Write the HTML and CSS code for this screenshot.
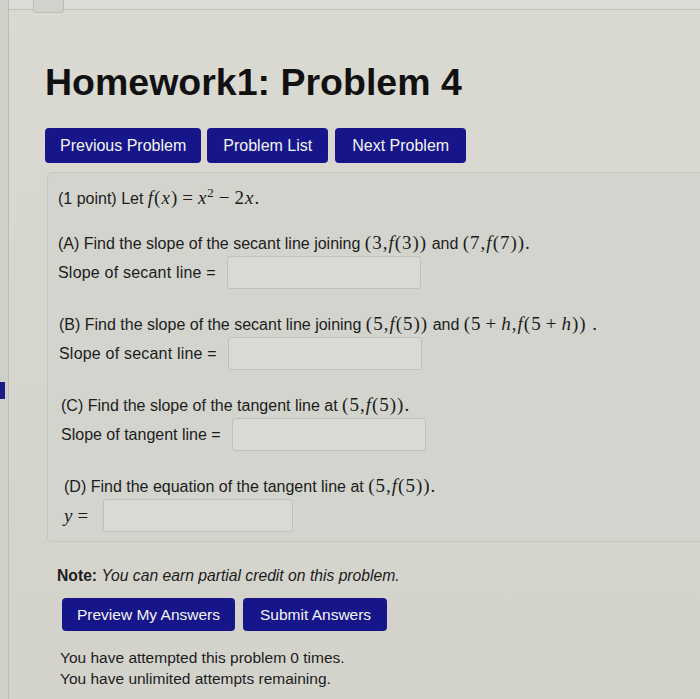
FILE: index.html
```html
<!DOCTYPE html>
<html>
<head>
<meta charset="utf-8">
<link rel="stylesheet" href="styles.css">
</head>
<body>
<div class="screen">
  <div class="edge"><div class="edge-mark"></div></div>
  <div class="page">
    <div class="topstrip"><div class="tab"></div></div>
    <div class="content">
      <h1 class="title">Homework1: Problem 4</h1>
      <div class="nav">
        <span class="btn">Previous Problem</span>
        <span class="btn btn-list">Problem List</span>
        <span class="btn btn-next">Next Problem</span>
      </div>
      <div class="panel">
        <div class="line">(1 point) Let <span class="m"><i>f</i>(<i>x</i>)<span class="op">=</span><i>x</i><sup>2</sup><span class="op">−</span>2<i>x</i>.</span></div>

        <div class="part part-a">
          <div class="line">(A) Find the slope of the secant line joining <span class="m">(3,<i>f</i>(3))</span> and <span class="m">(7,<i>f</i>(7)).</span></div>
          <div class="ans"><span class="lbl">Slope of secant line =</span><span class="box"></span></div>
        </div>

        <div class="part part-b">
          <div class="line">(B) Find the slope of the secant line joining <span class="m">(5,<i>f</i>(5))</span> and <span class="m">(5<span class="op">+</span><i>h</i>,<i>f</i>(5<span class="op">+</span><i>h</i>)) .</span></div>
          <div class="ans"><span class="lbl">Slope of secant line =</span><span class="box"></span></div>
        </div>

        <div class="part part-c">
          <div class="line">(C) Find the slope of the tangent line at <span class="m">(5,<i>f</i>(5)).</span></div>
          <div class="ans"><span class="lbl lbl-tight">Slope of tangent line =</span><span class="box"></span></div>
        </div>

        <div class="part part-d">
          <div class="line">(D) Find the equation of the tangent line at <span class="m">(5,<i>f</i>(5)).</span></div>
          <div class="ans"><span class="m m-y"><i>y</i><span class="op">=</span></span><span class="box box-y"></span></div>
        </div>
      </div>

      <div class="note"><b>Note:</b> <i>You can earn partial credit on this problem.</i></div>
      <div class="submit">
        <span class="btn btn-sm">Preview My Answers</span>
        <span class="btn btn-sm btn-submit">Submit Answers</span>
      </div>
      <div class="attempts">
        <div>You have attempted this problem 0 times.</div>
        <div>You have unlimited attempts remaining.</div>
      </div>
    </div>
  </div>
</div>
</body>
</html>
```
FILE: styles.css
```css
html, body {
  margin: 0;
  padding: 0;
  overflow: hidden;
  background: #d6d6cf;
}
body {
  font-family: "Liberation Sans", Arial, sans-serif;
  color: #1c1c1c;
}
.screen {
  display: flex;
  height: 699px;
  width: 700px;
  overflow: hidden;
}
.edge {
  width: 8px;
  flex: none;
  background: #d0d0ca;
  border-right: 1px solid #bcbcb6;
}
.edge-mark {
  margin-top: 382px;
  width: 5px;
  height: 17px;
  background: #1b1c86;
}
.page {
  flex: 1;
  min-width: 0;
  background: linear-gradient(180deg, #dadad3 0%, #d7d7d0 40%, #d3d3cc 100%);
}
.topstrip {
  height: 9px;
  border-bottom: 1px solid #c3c3bd;
  background: #dcdcd7;
  position: relative;
}
.tab {
  position: absolute;
  left: 24px;
  top: -2px;
  width: 29px;
  height: 13px;
  background: #d2d2cd;
  border: 1px solid #bdbdb7;
  border-radius: 3px;
}
.content {
  padding-left: 36px;
}
.title {
  margin: 51px 0 0 0;
  font-size: 37.5px;
  line-height: 42px;
  font-weight: bold;
  color: #111;
}
.nav {
  display: flex;
  gap: 6px;
  margin-top: 25px;
}
.btn {
  display: inline-flex;
  align-items: center;
  height: 35px;
  padding: 0 15px;
  background: #16168a;
  color: #f4f4f8;
  font-size: 16px;
  border-radius: 4px;
  box-sizing: border-box;
}
.btn-list {
  padding: 0 16px;
}
.btn-next {
  margin-left: 1px;
  padding: 0 17px;
}
.panel {
  margin: 9px -30px 0 2px;
  padding: 15px 10px 9px 10px;
  background: #d3d4cd;
  border: 1px solid #c5c6bf;
  border-radius: 5px;
  font-size: 16px;
}
.line {
  line-height: 20px;
  height: 20px;
  white-space: nowrap;
}
.m {
  font-family: "Liberation Serif", "Times New Roman", serif;
  font-size: 19px;
  letter-spacing: 1px;
}
.m sup {
  font-size: 13px;
  line-height: 0;
  vertical-align: 7px;
}
.op {
  margin: 0 4px;
}
.part {
  margin-top: 25px;
}
.part-b {
  padding-left: 1px;
}
.part-c {
  padding-left: 3px;
}
.part-d {
  padding-left: 6px;
}
.ans {
  display: flex;
  align-items: center;
  gap: 11px;
  margin-top: 3px;
  height: 33px;
}
.lbl {
  letter-spacing: 0.2px;
}
.lbl-tight {
  letter-spacing: 0;
}
.box {
  width: 194px;
  height: 33px;
  box-sizing: border-box;
  border: 1px solid #bfc0b9;
  border-radius: 3px;
  background: #d9dad3;
}
.m-y .op {
  margin-right: 0;
}
.box-y {
  width: 190px;
  margin-left: 3px;
}
.note {
  margin-top: 24px;
  margin-left: 12px;
  font-size: 15.7px;
  line-height: 20px;
}
.submit {
  display: flex;
  gap: 8px;
  margin: 12px 0 0 17px;
}
.btn-sm {
  height: 33px;
  font-size: 15.5px;
}
.btn-submit {
  padding: 0 16px 0 17px;
}
.attempts {
  margin: 16px 0 0 15px;
  font-size: 15.5px;
  line-height: 21px;
}
```
